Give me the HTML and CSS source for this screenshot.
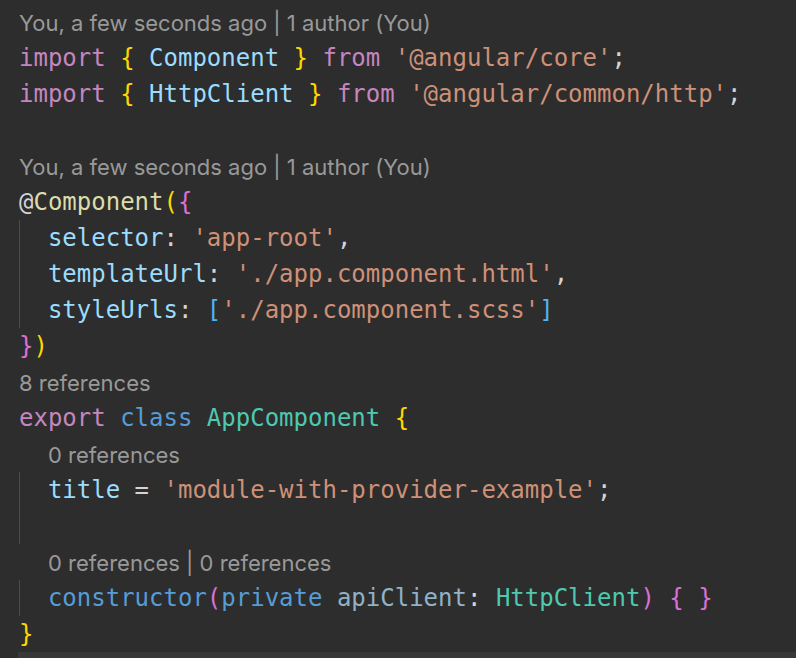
FILE: index.html
```html
<!DOCTYPE html>
<html>
<head>
<meta charset="utf-8">
<link rel="stylesheet" href="styles.css">
</head>
<body>
<div class="editor">
  <div class="lens">You, a few seconds ago | 1 author (You)</div>
  <div class="line"><span class="kw">import</span> <span class="b1">{</span> <span class="var">Component</span> <span class="b1">}</span> <span class="kw">from</span> <span class="str">'@angular/core'</span><span class="pun">;</span></div>
  <div class="line"><span class="kw">import</span> <span class="b1">{</span> <span class="var">HttpClient</span> <span class="b1">}</span> <span class="kw">from</span> <span class="str">'@angular/common/http'</span><span class="pun">;</span></div>
  <div class="line"></div>
  <div class="lens">You, a few seconds ago | 1 author (You)</div>
  <div class="line"><span class="pun">@</span><span class="fn">Component</span><span class="b1">(</span><span class="b2">{</span></div>
  <div class="line"><span class="guide">  </span><span class="var">selector</span><span class="pun">:</span> <span class="str">'app-root'</span><span class="pun">,</span></div>
  <div class="line"><span class="guide">  </span><span class="var">templateUrl</span><span class="pun">:</span> <span class="str">'./app.component.html'</span><span class="pun">,</span></div>
  <div class="line"><span class="guide">  </span><span class="var">styleUrls</span><span class="pun">:</span> <span class="b3">[</span><span class="str">'./app.component.scss'</span><span class="b3">]</span></div>
  <div class="line"><span class="b2">}</span><span class="b1">)</span></div>
  <div class="lens">8 references</div>
  <div class="line"><span class="kw">export</span> <span class="st">class</span> <span class="ty">AppComponent</span> <span class="b1">{</span></div>
  <div class="lens lens-ind">0 references</div>
  <div class="line"><span class="guide">  </span><span class="var">title</span> <span class="pun">=</span> <span class="str">'module-with-provider-example'</span><span class="pun">;</span></div>
  <div class="line"><span class="guide">  </span></div>
  <div class="lens lens-ind">0 references | 0 references</div>
  <div class="line"><span class="guide">  </span><span class="st">constructor</span><span class="b2">(</span><span class="st">private</span> <span class="dim">apiClient</span><span class="pun">:</span> <span class="ty">HttpClient</span><span class="b2">)</span> <span class="b2">{</span> <span class="b2">}</span></div>
  <div class="line"><span class="b1">}</span></div>
  <div class="hscroll"></div>
</div>
</body>
</html>
```
FILE: styles.css
```css
html, body {
  margin: 0;
  padding: 0;
  background: #2d2d2d;
  height: 100%;
  overflow: hidden;
}
.editor {
  padding-top: 4px;
  display: flex;
  flex-direction: column;
}
.line {
  height: 36px;
  line-height: 36px;
  padding-left: 19px;
  white-space: pre;
  font-family: "DejaVu Sans Mono", monospace;
  font-size: 24px;
  color: #d4d4d4;
}
.lens {
  height: 36px;
  line-height: 38px;
  padding-left: 19px;
  white-space: pre;
  font-family: Inter, "Noto Sans", sans-serif;
  font-size: 22px;
  color: #999999;
}
.lens-ind {
  padding-left: 48px;
}
.guide {
  display: inline-block;
  height: 36px;
  vertical-align: top;
  box-shadow: inset 1px 0 0 #4a4a4a;
}
.kw { color: #c586c0; }
.st { color: #569cd6; }
.var { color: #9cdcfe; }
.dim { color: #8fb2c9; }
.str { color: #ce9178; }
.pun { color: #d4d4d4; }
.fn { color: #dcdcaa; }
.ty { color: #4ec9b0; }
.b1 { color: #ffd700; }
.b2 { color: #da70d6; }
.b3 { color: #4fb3f5; }
.hscroll {
  margin-left: 18px;
  height: 6px;
  background: #383838;
}
```
